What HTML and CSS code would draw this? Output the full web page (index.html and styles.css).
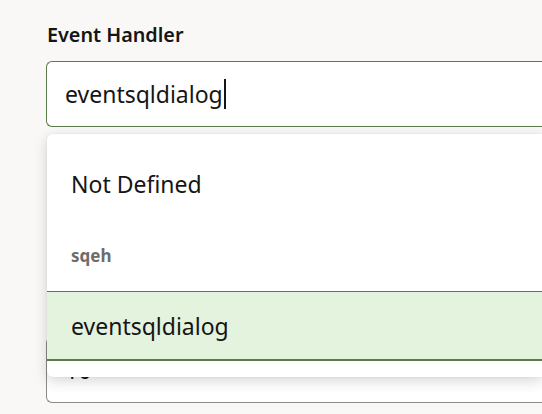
FILE: index.html
```html
<!DOCTYPE html>
<html>
<head>
<meta charset="utf-8">
<link rel="stylesheet" href="styles.css">
</head>
<body>
<div class="page">
  <div class="field">
    <div class="label">Event Handler</div>
    <div class="input focused"><span class="value">eventsqldialog</span><span class="caret"></span></div>
  </div>
  <div class="field second">
    <div class="input plain"><span class="value">10</span></div>
  </div>
  <div class="dropdown">
    <div class="option">Not Defined</div>
    <div class="group">sqeh</div>
    <div class="option selected">eventsqldialog</div>
  </div>
</div>
</body>
</html>
```
FILE: styles.css
```css
html, body {
  margin: 0;
  padding: 0;
  background: #f9f8f6;
  overflow: hidden;
  width: 542px;
  height: 414px;
}
.page {
  position: relative;
  width: 542px;
  box-sizing: border-box;
  padding: 21px 0 0 46px;
  font-family: "Noto Sans", "Open Sans", sans-serif;
  color: #161513;
}
.field {
  width: 496px;
}
.label {
  font-size: 19.8px;
  font-weight: 600;
  line-height: 28px;
  padding-left: 1px;
  margin-bottom: 12px;
}
.input {
  box-sizing: border-box;
  height: 66px;
  border-radius: 6px 0 0 6px;
  background: #fff;
  display: flex;
  align-items: center;
  padding-left: 18px;
  font-size: 23px;
}
.focused {
  border: 1px solid #5a7a48;
  border-right: none;
}
.plain {
  border: 1px solid #8b8a88;
  border-right: none;
}
.second {
  margin-top: 210px;
}
.caret {
  width: 2px;
  height: 30px;
  background: #161513;
  margin-left: 1px;
}
.dropdown {
  position: absolute;
  left: 47px;
  top: 134px;
  width: 495px;
  background: #fff;
  border-radius: 6px 0 0 6px;
  box-shadow: 0 4px 14px rgba(0,0,0,0.16), 0 0 2px rgba(0,0,0,0.08);
  padding: 15px 0 16px;
}
.option {
  box-sizing: border-box;
  height: 70px;
  display: flex;
  align-items: center;
  padding-left: 24px;
  font-size: 23px;
}
.group {
  height: 72px;
  display: flex;
  align-items: center;
  padding-left: 24px;
  font-size: 17px;
  font-weight: 700;
  color: #6f6c68;
}
.selected {
  background: #e4f3de;
  border-top: 1px solid #5a7a48;
  border-bottom: 2px solid #5a7a48;
}
```
